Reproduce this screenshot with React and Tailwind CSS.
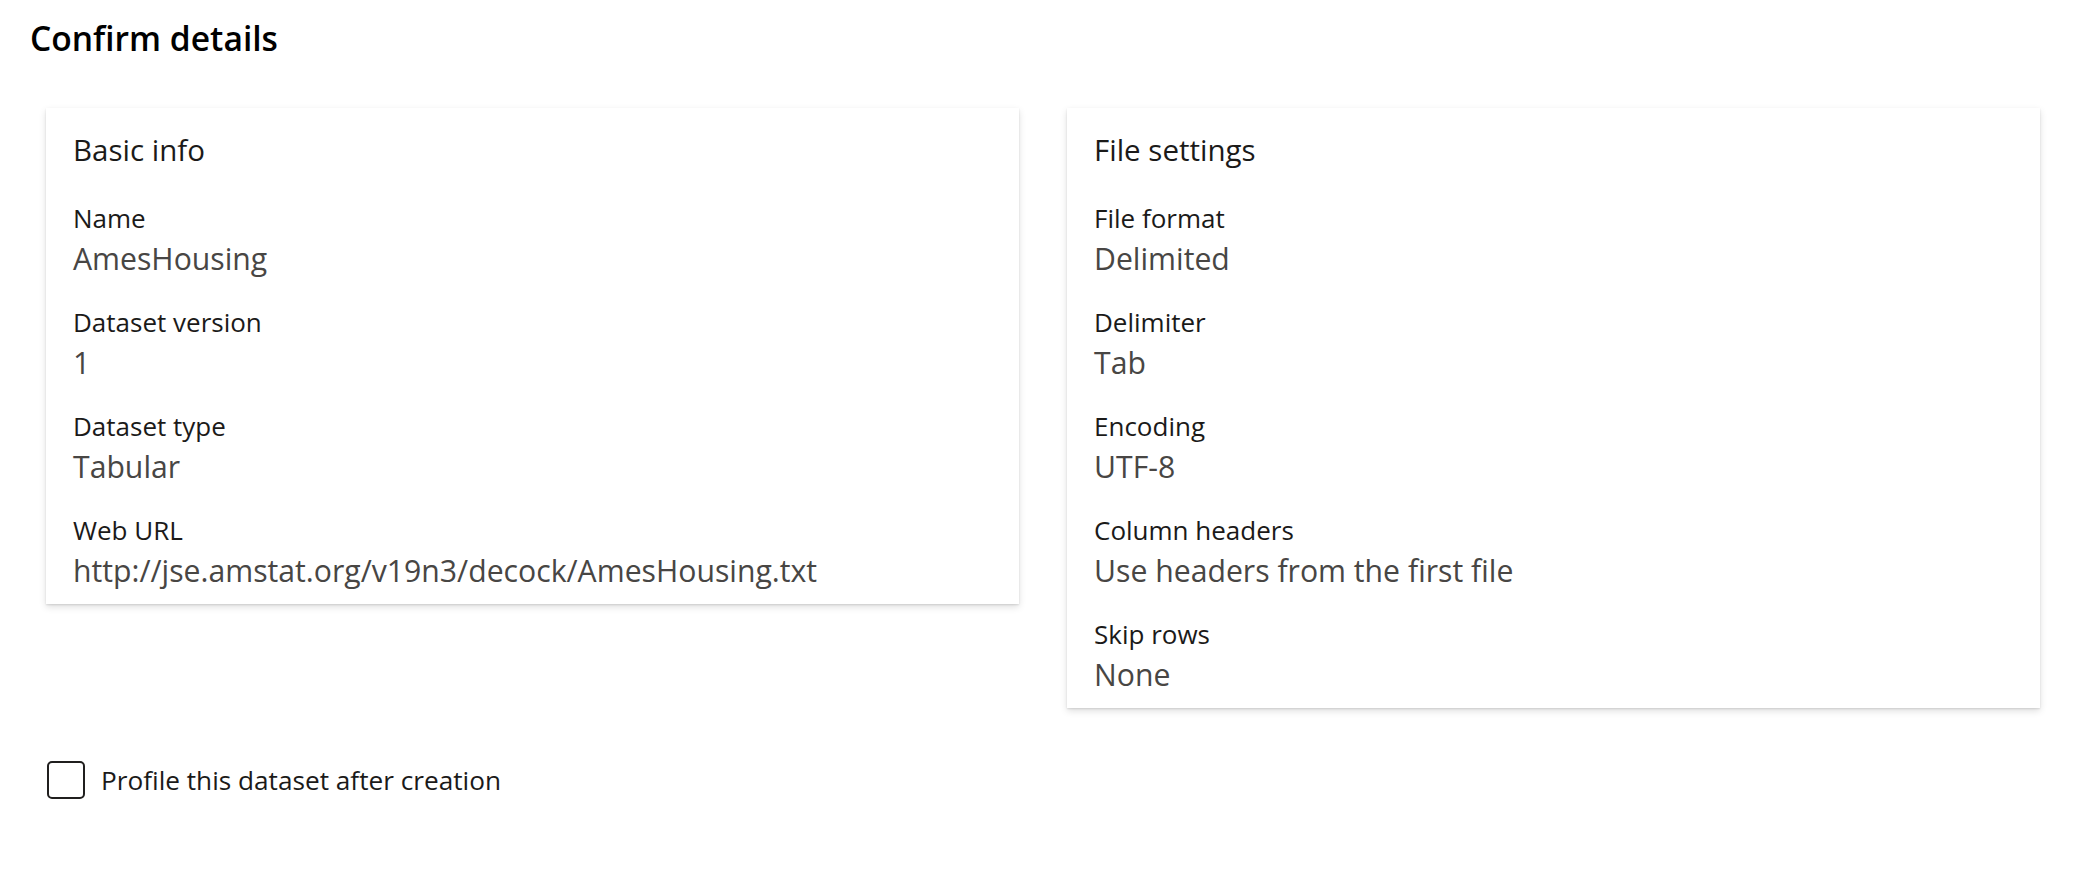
import React from "react";

const basic = [
  ["Name", "AmesHousing"],
  ["Dataset version", "1"],
  ["Dataset type", "Tabular"],
  ["Web URL", "http://jse.amstat.org/v19n3/decock/AmesHousing.txt"],
];

const file = [
  ["File format", "Delimited"],
  ["Delimiter", "Tab"],
  ["Encoding", "UTF-8"],
  ["Column headers", "Use headers from the first file"],
  ["Skip rows", "None"],
];

function Card({ title, items }) {
  return (
    <div className="bg-white pt-[22px] pb-[13px] px-[27px] shadow-[0_3px_7px_rgba(0,0,0,0.13),0_0.6px_1.7px_rgba(0,0,0,0.11)]">
      <div className="text-[29.5px] leading-[40px] text-[#1b1a19]">{title}</div>
      <div className="mt-[30px] flex flex-col gap-[25px]">
        {items.map(([label, value]) => (
          <div key={label} className="flex flex-col">
            <div className="text-[26px] leading-[36px] mb-[3px] text-[#1b1a19]">{label}</div>
            <div className="text-[30.2px] leading-[40px] text-[#484644]">{value}</div>
          </div>
        ))}
      </div>
    </div>
  );
}

export default function App() {
  return (
    <div
      className="w-[2086px] h-[896px] bg-white overflow-hidden"
      style={{ fontFamily: '"Open Sans", "Noto Sans", sans-serif' }}
    >
      <div className="pt-[18px] pl-[30px] text-[33.6px] leading-[40px] font-semibold text-black">
        Confirm details
      </div>
      <div className="mt-[50px] px-[46px] grid grid-cols-2 gap-[48px] items-start">
        <Card title="Basic info" items={basic} />
        <Card title="File settings" items={file} />
      </div>
      <div className="mt-[53px] pl-[47px] flex items-center gap-[16px]">
        <div className="w-[38px] h-[38px] border-2 border-[#201f1e] rounded-[5px] bg-white" />
        <div className="text-[26.2px] leading-[38px] text-[#1b1a19]">
          Profile this dataset after creation
        </div>
      </div>
    </div>
  );
}
